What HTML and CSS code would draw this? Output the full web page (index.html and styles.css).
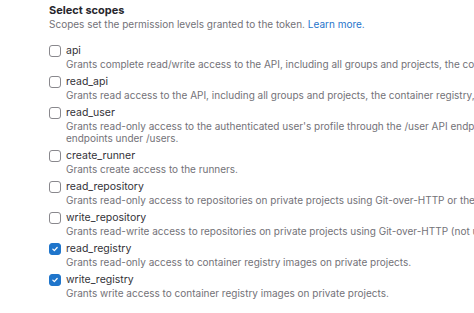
FILE: index.html
```html
<!DOCTYPE html>
<html lang="en">
<head>
<meta charset="utf-8">
<link rel="stylesheet" href="styles.css">
</head>
<body>
<div class="page">
  <div class="group">
    <div class="title">Select scopes</div>
    <div class="subtitle">Scopes set the permission levels granted to the token. <a class="link" href="#">Learn more.</a></div>
    <ul class="scopes">
      <li class="scope">
        <div class="head"><span class="box"></span><span class="name">api</span></div>
        <div class="desc">Grants complete read/write access to the API, including all groups and projects, the container registry, the dependency proxy, and the package registry.</div>
      </li>
      <li class="scope">
        <div class="head"><span class="box"></span><span class="name">read_api</span></div>
        <div class="desc">Grants read access to the API, including all groups and projects, the container registry, and the package registry.</div>
      </li>
      <li class="scope">
        <div class="head"><span class="box"></span><span class="name">read_user</span></div>
        <div class="desc">Grants read-only access to the authenticated user's profile through the /user API endpoint, which includes username, public email, and full name. Also grants access to read-only API<br>endpoints under /users.</div>
      </li>
      <li class="scope">
        <div class="head"><span class="box"></span><span class="name">create_runner</span></div>
        <div class="desc">Grants create access to the runners.</div>
      </li>
      <li class="scope">
        <div class="head"><span class="box"></span><span class="name">read_repository</span></div>
        <div class="desc">Grants read-only access to repositories on private projects using Git-over-HTTP or the Repository Files API.</div>
      </li>
      <li class="scope">
        <div class="head"><span class="box"></span><span class="name">write_repository</span></div>
        <div class="desc">Grants read-write access to repositories on private projects using Git-over-HTTP (not using the API).</div>
      </li>
      <li class="scope">
        <div class="head"><span class="box checked"><svg viewBox="0 0 12 12" width="12" height="12"><path d="M3.4 6.2 5.2 8 8.6 4.2" fill="none" stroke="#fff" stroke-width="1.5" stroke-linecap="round" stroke-linejoin="round"/></svg></span><span class="name">read_registry</span></div>
        <div class="desc">Grants read-only access to container registry images on private projects.</div>
      </li>
      <li class="scope">
        <div class="head"><span class="box checked"><svg viewBox="0 0 12 12" width="12" height="12"><path d="M3.4 6.2 5.2 8 8.6 4.2" fill="none" stroke="#fff" stroke-width="1.5" stroke-linecap="round" stroke-linejoin="round"/></svg></span><span class="name">write_registry</span></div>
        <div class="desc">Grants write access to container registry images on private projects.</div>
      </li>
    </ul>
  </div>
</div>
</body>
</html>
```
FILE: styles.css
```css
html, body {
  margin: 0;
  padding: 0;
  background: #ffffff;
  overflow: hidden;
}
body {
  width: 474px;
  height: 313px;
  font-family: Inter, "Noto Sans", "Liberation Sans", sans-serif;
  color: #333238;
}
.page {
  padding: 3px 0 0 49px;
}
.group {
  width: 1000px;
}
.title {
  font-size: 11px;
  font-weight: 700;
  line-height: 14px;
  color: #28272d;
}
.subtitle {
  font-size: 10px;
  line-height: 14px;
  color: #737278;
  white-space: nowrap;
}
.link {
  color: #1f75cb;
  text-decoration: none;
}
.scopes {
  list-style: none;
  margin: 13px 0 0 0;
  padding: 0;
}
.scope {
  margin-bottom: 5px;
}
.head {
  display: flex;
  align-items: center;
  gap: 5px;
  height: 14px;
}
.box {
  width: 12px;
  height: 12px;
  box-sizing: border-box;
  border: 1px solid #89888d;
  border-radius: 3px;
  background: #fff;
  display: flex;
  align-items: center;
  justify-content: center;
  flex: none;
}
.box.checked {
  background: #1f75cb;
  border-color: #1f75cb;
}
.box svg {
  display: block;
}
.name {
  font-size: 10.5px;
  line-height: 14px;
  color: #333238;
}
.desc {
  margin-left: 17px;
  font-size: 10px;
  line-height: 12px;
  color: #737278;
  white-space: nowrap;
}
```
